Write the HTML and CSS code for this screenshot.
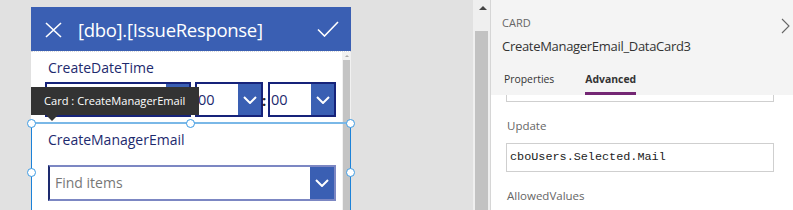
FILE: index.html
```html
<!DOCTYPE html>
<html>
<head>
<meta charset="utf-8">
<link rel="stylesheet" href="styles.css">
</head>
<body>
<div class="app">
  <div class="canvas">
    <div class="form">
      <div class="form-header">
        <svg class="icon-x" width="17" height="16" viewBox="0 0 17 16"><path d="M1 1L16 15M16 1L1 15" stroke="#fff" stroke-width="1.6" fill="none"/></svg>
        <span class="form-title">[dbo].[IssueResponse]</span>
        <svg class="icon-check" width="22" height="16" viewBox="0 0 22 16"><path d="M1 8.5L7.5 15L21 1" stroke="#fff" stroke-width="1.6" fill="none"/></svg>
      </div>
      <div class="form-body">
        <div class="form-content">
          <div class="card card-date">
            <div class="field-label">CreateDateTime</div>
            <div class="date-row">
              <div class="dbox dbox-date"><span class="dval"></span><span class="dbtn"><svg width="14" height="8" viewBox="0 0 14 8"><path d="M1 1L7 7L13 1" stroke="#fff" stroke-width="2" fill="none"/></svg></span></div>
              <div class="dbox dbox-time"><span class="dval">00</span><span class="dbtn"><svg width="14" height="8" viewBox="0 0 14 8"><path d="M1 1L7 7L13 1" stroke="#fff" stroke-width="2" fill="none"/></svg></span></div>
              <span class="colon">:</span>
              <div class="dbox dbox-time"><span class="dval">00</span><span class="dbtn"><svg width="14" height="8" viewBox="0 0 14 8"><path d="M1 1L7 7L13 1" stroke="#fff" stroke-width="2" fill="none"/></svg></span></div>
            </div>
          </div>
          <div class="card card-email">
            <div class="field-label">CreateManagerEmail</div>
            <div class="combo"><span class="placeholder">Find items</span><span class="dbtn combo-btn"><svg width="14" height="8" viewBox="0 0 14 8"><path d="M1 1L7 7L13 1" stroke="#fff" stroke-width="2" fill="none"/></svg></span></div>
          </div>
        </div>
        <div class="form-scroll">
          <span class="mini-arrow"></span>
          <div class="form-thumb"></div>
        </div>
      </div>
    </div>
  </div>
  <div class="main-scroll">
    <span class="up-arrow"></span>
    <div class="main-thumb"></div>
  </div>
  <div class="panel">
    <div class="panel-head">
      <div class="panel-top">
        <div>
          <div class="kind">CARD</div>
          <div class="name">CreateManagerEmail_DataCard3</div>
        </div>
        <svg class="chev" width="9" height="16" viewBox="0 0 9 16"><path d="M1 1L8 8L1 15" stroke="#666" stroke-width="1.1" fill="none"/></svg>
      </div>
      <div class="tabs">
        <span class="tab">Properties</span>
        <span class="tab tab-active">Advanced</span>
      </div>
    </div>
    <div class="panel-body">
      <div class="prop-box prop-cut"></div>
      <div class="prop-label">Update</div>
      <div class="prop-box prop-input">cboUsers.Selected.Mail</div>
      <div class="prop-label">AllowedValues</div>
    </div>
  </div>

  <div class="selection">
    <span class="handle h-tl"></span>
    <span class="handle h-tm"></span>
    <span class="handle h-tr"></span>
    <span class="handle h-ml"></span>
    <span class="handle h-mr"></span>
  </div>
  <div class="tooltip">Card : CreateManagerEmail</div>
</div>
</body>
</html>
```

FILE: styles.css
```css
* { box-sizing: border-box; }
html, body { margin: 0; padding: 0; }
body {
  width: 793px;
  height: 210px;
  overflow: hidden;
  font-family: "Open Sans", "Noto Sans", sans-serif;
  background: #e1e1e1;
}
.app {
  position: relative;
  display: flex;
  width: 793px;
  height: 210px;
  overflow: hidden;
}
.canvas {
  width: 473px;
  height: 210px;
  padding: 7px 0 0 31px;
  background: #e1e1e1;
  flex-shrink: 0;
}
.form {
  width: 320px;
  height: 203px;
  display: flex;
  flex-direction: column;
  background: #fff;
  overflow: hidden;
}
.form-header {
  height: 44px;
  flex-shrink: 0;
  background: #3a5fb3;
  display: flex;
  align-items: center;
  padding: 0 12px 0 14px;
  color: #fff;
}
.icon-x { margin-top: 1px; }
.form-title {
  margin-left: 16px;
  font-size: 18.5px;
  letter-spacing: -0.3px;
  flex: 1;
}
.form-body {
  flex: 1;
  display: flex;
  border-top: 1px dotted #d8d8d8;
  min-height: 0;
}
.form-content {
  flex: 1;
  padding-left: 14px;
}
.field-label {
  padding-left: 3px;
  font-size: 14px;
  color: #1d2a6e;
  line-height: 19px;
}
.card-date .field-label { margin-top: 6px; }
.date-row {
  display: flex;
  align-items: center;
  margin-top: 5px;
  height: 35px;
}
.dbox {
  height: 35px;
  display: flex;
  border: 2px solid #16237a;
  background: #fff;
}
.dbox-date { width: 146px; }
.dbox-time { width: 68px; margin-left: 4px; }
.dval {
  flex: 1;
  padding-left: 1px;
  font-size: 14.5px;
  line-height: 31px;
  color: #1d2a6e;
}
.dbtn {
  width: 23px;
  background: #3a5fb3;
  display: flex;
  align-items: center;
  justify-content: center;
}
.colon {
  width: 1px;
  font-size: 15px;
  color: #222;
  font-weight: 700;
  text-indent: -1px;
}
.colon + .dbox { margin-left: 4px; }
.card-email { margin-top: 13px; }
.combo {
  margin: 16px 0 0 3px;
  width: 288px;
  height: 36px;
  display: flex;
  border: 2px solid #7c87c3;
  border-left-color: #1d2a6e;
  background: #fff;
}
.placeholder {
  flex: 1;
  padding-left: 5px;
  font-size: 14px;
  line-height: 32px;
  color: #777;
}
.combo-btn { width: 24px; }
.form-scroll {
  width: 9px;
  background: #f1f1f1;
  padding: 3px 1px 0 1px;
}
.mini-arrow {
  display: block;
  margin: 0 auto;
  width: 0;
  height: 0;
  border-left: 2px solid transparent;
  border-right: 2px solid transparent;
  border-bottom: 2px solid #aaa;
}
.form-thumb {
  margin-top: 3px;
  height: 160px;
  background: #c4c4c4;
}
.main-scroll {
  width: 17px;
  flex-shrink: 0;
  background: #efefef;
  padding: 6px 2px 0 2px;
}
.up-arrow {
  display: block;
  margin-left: 4px;
  width: 0;
  height: 0;
  border-left: 4px solid transparent;
  border-right: 4px solid transparent;
  border-bottom: 4px solid #444;
}
.main-thumb {
  margin-top: 21px;
  height: 180px;
  width: 13px;
  background: #c2c2c2;
}
.panel {
  flex: 1;
  border-left: 1px solid #d6d6d6;
  background: #fff;
  display: flex;
  flex-direction: column;
}
.panel-head {
  height: 95px;
  flex-shrink: 0;
  background: #f4f4f4;
  padding-left: 11px;
}
.panel-top {
  display: flex;
  justify-content: space-between;
  padding-right: 3px;
}
.chev { margin-top: 18px; }
.kind {
  margin-top: 15px;
  font-size: 11px;
  color: #666;
  line-height: 16px;
}
.name {
  margin-top: 5px;
  font-size: 13px;
  letter-spacing: -0.3px;
  color: #333;
  line-height: 20px;
}
.tabs {
  display: flex;
  margin-top: 14px;
  padding-left: 2px;
}
.tab {
  font-size: 10.4px;
  color: #333;
  line-height: 19px;
  height: 22px;
  border-bottom: 3px solid transparent;
}
.tab-active {
  margin-left: 31px;
  font-weight: 700;
  border-bottom-color: #742774;
  box-sizing: content-box;
}
.panel-body {
  flex: 1;
  padding-left: 15px;
}
.prop-box {
  width: 268px;
  border: 1px solid #cfcfcf;
  background: #fff;
}
.prop-cut {
  height: 7px;
  border-top: none;
}
.prop-label {
  font-size: 11.5px;
  color: #666;
  line-height: 16px;
  padding-left: 1px;
}
.prop-cut + .prop-label { margin-top: 16px; }
.prop-input {
  margin-top: 9px;
  height: 29px;
  font-family: "Liberation Mono", "DejaVu Sans Mono", monospace;
  font-size: 11.8px;
  color: #222;
  line-height: 27px;
  padding-left: 3px;
}
.prop-input + .prop-label { margin-top: 16px; }

.selection {
  position: absolute;
  left: 31px;
  top: 122px;
  width: 320px;
  height: 100px;
  border-top: 2px solid #7ab8e7;
  border-left: 1px solid #1c82d8;
  border-right: 1px solid #1c82d8;
}
.handle {
  position: absolute;
  width: 9px;
  height: 9px;
  border-radius: 50%;
  background: #fff;
  border: 1.5px solid #3d9be3;
}
.h-tl { left: -5px; top: -5.5px; }
.h-tm { left: 154px; top: -5.5px; }
.h-tr { right: -5px; top: -5.5px; }
.h-ml { left: -5px; top: 43.5px; }
.h-mr { right: -5px; top: 43.5px; }
.tooltip {
  position: absolute;
  left: 31px;
  top: 87px;
  width: 168px;
  height: 28px;
  background: #333;
  color: #fff;
  font-size: 11.1px;
  line-height: 28px;
  padding-left: 13px;
  white-space: nowrap;
}
.tooltip::after {
  content: "";
  position: absolute;
  left: 15px;
  top: 28px;
  border-left: 6px solid transparent;
  border-right: 6px solid transparent;
  border-top: 6px solid #333;
}
```
